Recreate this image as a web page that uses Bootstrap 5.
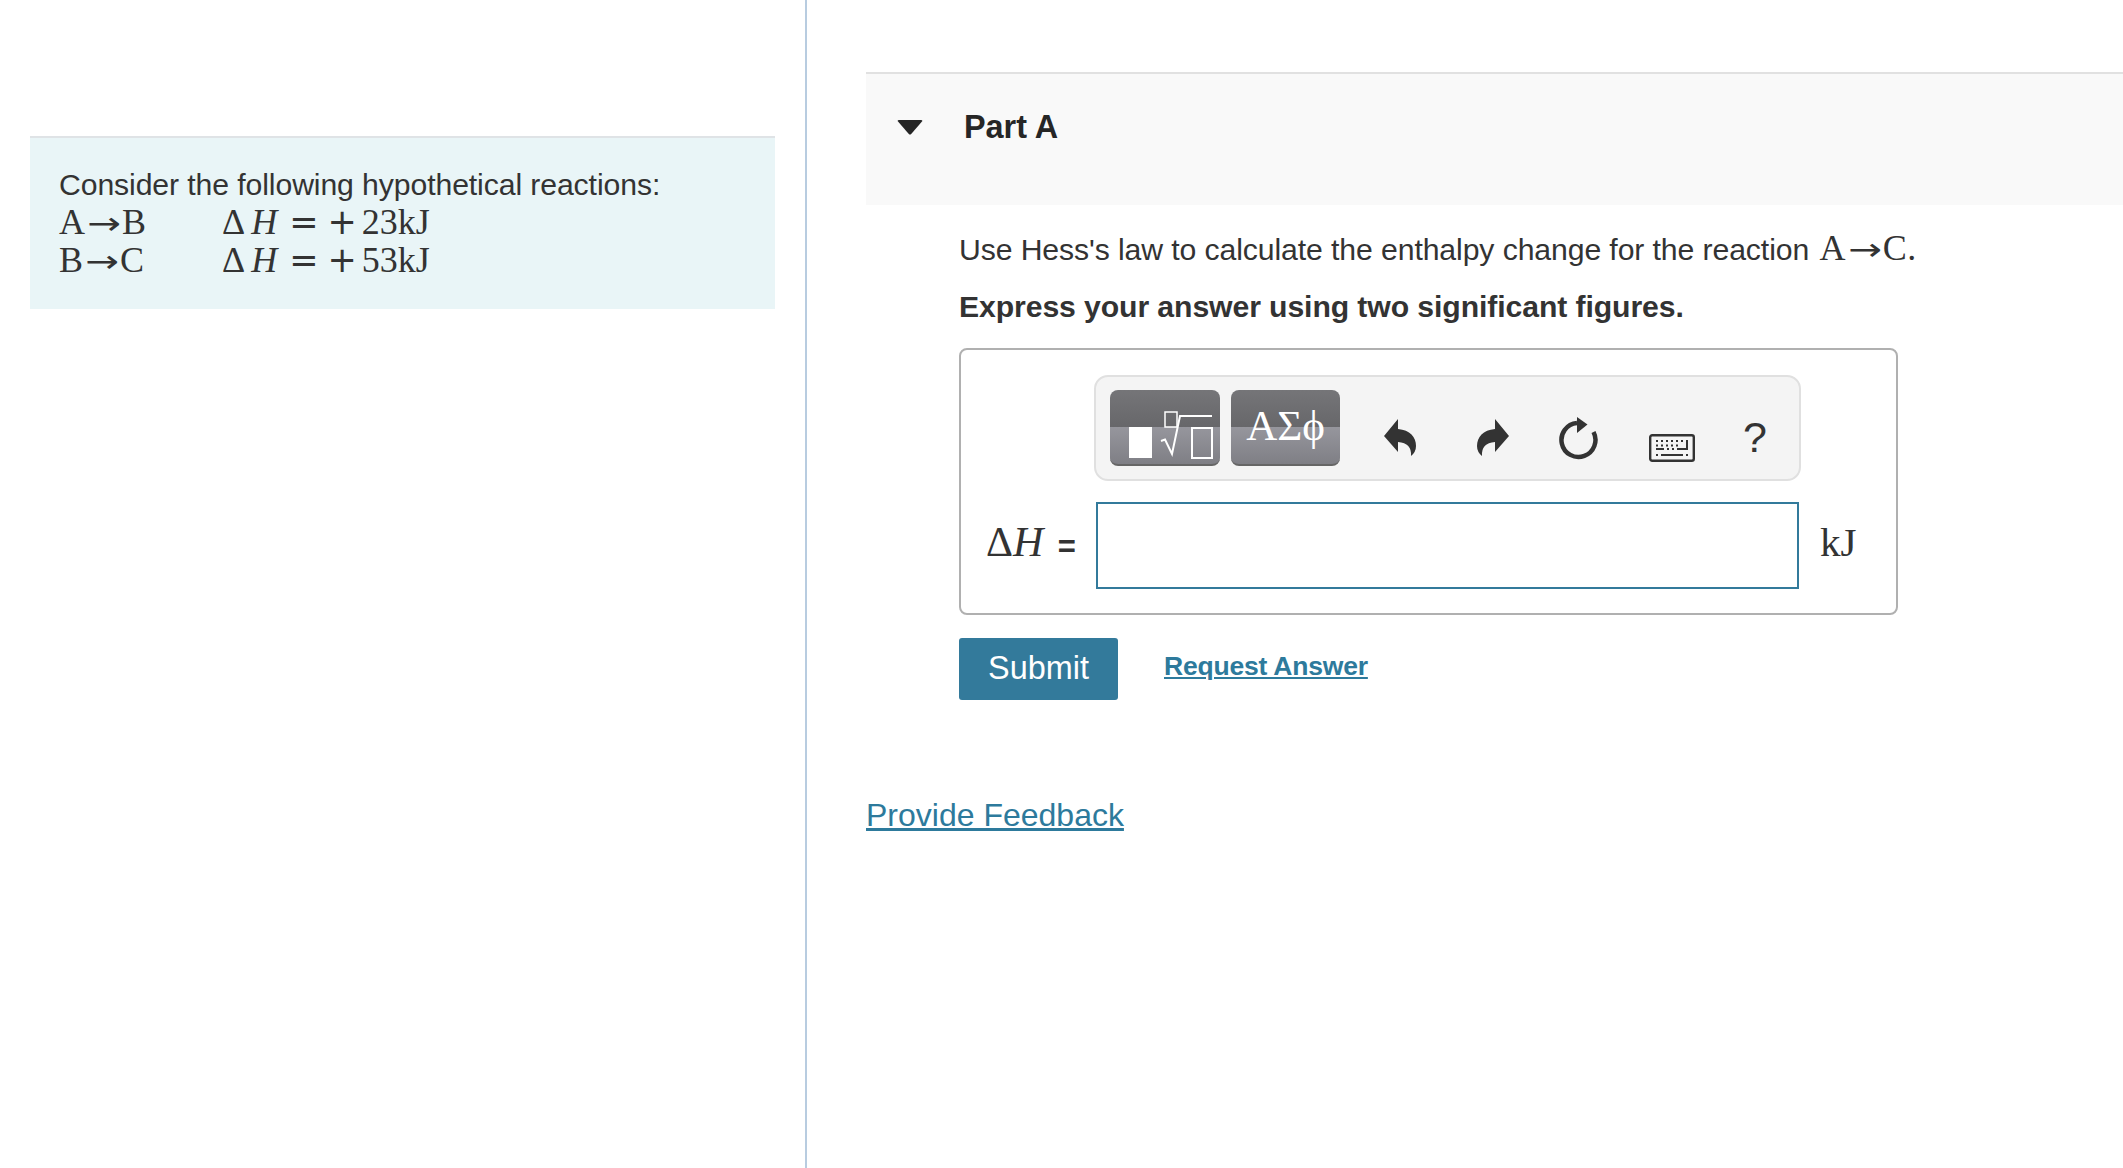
<!DOCTYPE html>
<html lang="en">
<head>
<meta charset="utf-8">
<title>Part A</title>
<link rel="stylesheet" href="https://cdn.jsdelivr.net/npm/bootstrap@5.3.0/dist/css/bootstrap.min.css">
<style>
html,body{height:100%;}
body{font-family:"Liberation Sans",Arial,sans-serif;color:#333;background:#fff;overflow:hidden;}
.tex{font-family:"Liberation Serif","Times New Roman",serif;}
.tex i{font-style:italic;}
.sym{font-family:"DejaVu Sans",sans-serif;font-size:35px;line-height:0;}
.arw{display:inline-block;font-family:"DejaVu Sans",sans-serif;font-size:31px;line-height:30px;letter-spacing:0;transform:scaleX(1.3);margin:0 5px 0 6px;}
.shell{height:1168px;}
.leftpane{width:807px;border-right:2px solid #b8cce0;padding:136px 30px 0 30px;flex:none;}
.context{background:#e9f5f7;border-top:2px solid #dfe3e6;width:745px;height:173px;padding:28px 29px 0;font-size:30.2px;line-height:37px;letter-spacing:-.1px;}
.rxrow{display:flex;font-size:36px;line-height:38px;height:38px;letter-spacing:0;}
.rxrow .lhs{width:163px;white-space:nowrap;}
.rxrow .rhs{white-space:nowrap;}
.rxrow i{margin:0 2px 0 6px;}
.rxrow .eqs{margin:0 7px 0 10px;}
.rxrow .pls{margin:0 5px 0 2px;}
.rightpane{padding:72px 0 0 59px;flex:1;}
.parthead{background:#f9f9f9;border-top:2px solid #e1e1e1;height:133px;padding-top:33px;font-size:32.4px;font-weight:700;line-height:40px;color:#262626;}
.caret{width:26px;height:15px;margin:13px 0 0 31px;flex:none;}
.parttitle{margin-left:41px;}
.partbody{padding:22px 0 0 93px;}
.ask{font-size:30.2px;line-height:42px;margin:0;letter-spacing:-.1px;height:44px;white-space:nowrap;}
.ask .tex{font-size:36px;letter-spacing:.4px;margin-left:2px;}
.fmt{font-size:30.2px;font-weight:700;line-height:42px;margin:15px 0 0;letter-spacing:-.1px;}
.answerbox{width:939px;height:267px;border:2px solid #b0b0b0;border-radius:8px;margin-top:20px;padding:25px 0 0 133px;position:relative;}
.tools{width:707px;height:106px;background:#f4f4f4;border:2px solid #e0e0e0;border-radius:14px;padding:13px 0 0 14px;align-items:flex-start;}
.tmplbtn{height:76px;border-radius:8px;background:linear-gradient(#757578 0,#67676a 50%,#96969d 50%,#7f7f85 100%);border:0;border-bottom:2px solid #666;padding:0;color:#fff;flex:none;}
.tmpl1{width:110px;margin-right:11px;}
.tmpl2{width:109px;font-size:43px;line-height:1;padding-bottom:4px;}
.tmplbtn svg{display:block;}
.tico{flex:none;display:block;}
.qmark{font-size:43px;line-height:44px;color:#333;margin:25px 0 0 48px;}
.entry{margin:21px 0 0 0;}
.entry-label{position:absolute;left:25px;top:170px;font-size:42px;line-height:44px;white-space:nowrap;}
.entry-label span{font-family:"Liberation Sans",Arial,sans-serif;font-size:31px;font-weight:700;margin-left:4px;vertical-align:-1px;}
.entry-input{width:703px;height:87px;margin-left:2px;border:2px solid #337a9b;border-radius:0;padding:0 10px;background:#fff;display:block;}
.entry-unit{font-size:41px;line-height:44px;margin:0 0 8px 21px;}
.actions{margin-top:23px;}
.subbtn{width:159px;height:62px;background:#337a9b;border:0;border-radius:3px;color:#fff;font-size:32.4px;line-height:1;padding:0 0 2px;}
.reqlink{color:#2d7a9c;font-size:26.5px;font-weight:700;margin-left:46px;text-decoration:underline;position:relative;top:-2px;letter-spacing:-.2px;}
.feedback{display:inline-block;color:#2d7a9c;font-size:32px;line-height:40px;margin-top:95px;text-decoration:underline;}
</style>
</head>
<body>
<div class="d-flex shell">
  <div class="leftpane">
    <div class="context">
      <div>Consider the following hypothetical reactions:</div>
      <div class="tex rxrow"><span class="lhs">A<span class="arw">→</span>B</span><span class="rhs">Δ<i>H</i><span class="sym eqs">=</span><span class="sym pls">+</span>23kJ</span></div>
      <div class="tex rxrow"><span class="lhs">B<span class="arw">→</span>C</span><span class="rhs">Δ<i>H</i><span class="sym eqs">=</span><span class="sym pls">+</span>53kJ</span></div>
    </div>
  </div>
  <div class="rightpane">
    <div class="parthead d-flex align-items-start">
      <svg class="caret" viewBox="0 0 26 15"><path d="M1 1.5Q0 0 2 0H24Q26 0 25 1.5L14.2 14Q13 15.2 11.8 14Z" fill="#262626"/></svg>
      <div class="parttitle">Part A</div>
    </div>
    <div class="partbody">
      <p class="ask">Use Hess's law to calculate the enthalpy change for the reaction <span class="tex">A<span class="arw">→</span>C.</span></p>
      <p class="fmt">Express your answer using two significant figures.</p>
      <div class="answerbox">
        <div class="tools d-flex">
          <button type="button" class="tmplbtn tmpl1" aria-label="templates">
            <svg width="110" height="76" viewBox="0 0 110 76"><rect x="19" y="37" width="23" height="31" fill="#fff"/><rect x="55" y="22" width="12" height="15" fill="none" stroke="#fff" stroke-width="1.5"/><path d="M51 51l4-1.5 7 14.5 8-38h32" fill="none" stroke="#fff" stroke-width="2"/><rect x="82" y="38" width="20" height="30" fill="none" stroke="#fff" stroke-width="2"/></svg>
          </button>
          <button type="button" class="tmplbtn tmpl2 tex">ΑΣϕ</button>
          <svg class="tico" style="margin:29px 0 0 44px" width="32" height="37" viewBox="0 0 32 37"><path d="M0 17L14 0V10C26 11 32 18 32 27Q32 33 27 37Q28 24 14 23V33Z" fill="#333"/></svg>
          <svg class="tico" style="margin:29px 0 0 61px" width="32" height="37" viewBox="0 0 32 37"><path d="M32 17L18 0V10C6 11 0 18 0 27Q0 33 5 37Q4 24 18 23V33Z" fill="#333"/></svg>
          <svg class="tico" style="margin:27px 0 0 50px" width="39" height="43" viewBox="0 0 39 43"><path d="M18 6A17 17 0 1 0 34.5 15" fill="none" stroke="#333" stroke-width="4.5"/><path d="M18 0L28.5 7.5 18 16Z" fill="#333"/></svg>
          <svg class="tico" style="margin:44px 0 0 51px" width="46" height="28" viewBox="0 0 46 28"><rect x="1.2" y="1.2" width="43.6" height="25.6" rx="2" fill="none" stroke="#333" stroke-width="2.4"/><path d="M7 7h2M12 7h2M17 7h2M22 7h2M27 7h2M32 7h2M37 7h2M7 11.5h2M12 11.5h2M17 11.5h2M22 11.5h2M27 11.5h2M7 15h8M18 15h2M23 15h2M28 15h10M38 7v9M7 21h2M12 21h22M37 21h2" stroke="#333" stroke-width="2" fill="none"/></svg>
          <div class="qmark">?</div>
        </div>
        <div class="entry d-flex align-items-center">
          <div class="entry-label tex">Δ<i>H</i> <span>=</span></div>
          <input class="entry-input" type="text" aria-label="answer">
          <div class="entry-unit tex">kJ</div>
        </div>
      </div>
      <div class="actions d-flex align-items-center">
        <button type="button" class="btn subbtn">Submit</button>
        <a class="reqlink" href="#">Request Answer</a>
      </div>
    </div>
    <a class="feedback" href="#">Provide Feedback</a>
  </div>
</div>
<script src="https://cdn.jsdelivr.net/npm/bootstrap@5.3.0/dist/js/bootstrap.bundle.min.js"></script>
</body>
</html>
